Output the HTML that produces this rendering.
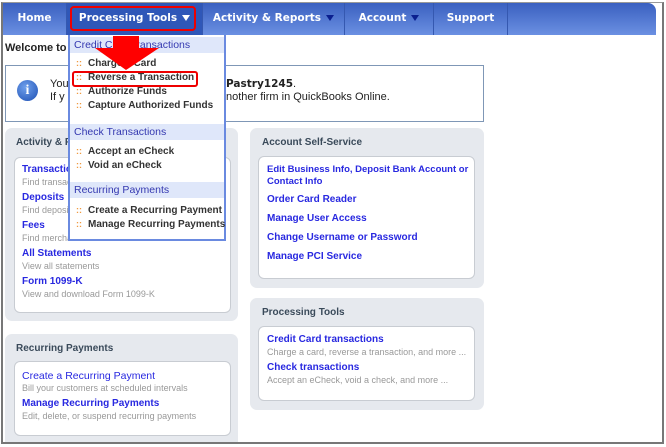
<!DOCTYPE html>
<html><head><style>
*{margin:0;padding:0;box-sizing:border-box}
body{width:666px;height:447px;background:#fff;position:relative;overflow:hidden;font-family:"Liberation Sans",Arial,sans-serif}
.abs{position:absolute}
.frame{left:1px;top:2px;width:663px;height:442px;border:2px solid #777;border-top:1px solid #999;z-index:5}
.nav{left:3px;top:3px;width:653px;height:32px;background:linear-gradient(#3a60c0,#6b90e2);border-top-right-radius:8px}
.nv{position:absolute;top:0;height:32px;line-height:30px;color:#fff;font-family:"DejaVu Sans",sans-serif;font-weight:bold;font-size:10.5px;text-align:center;border-right:1px solid #3558b0}
.tri{display:inline-block;width:0;height:0;border-left:4px solid transparent;border-right:4px solid transparent;border-top:6px solid #0a1f8f;margin-left:5px;vertical-align:middle}
.panel{background:#e6e9ee;border-radius:7px}
.ptitle{position:absolute;font-size:10px;color:#3a4a5a;font-weight:bold}
.inner{background:#fff;border:1px solid #c8ccd2;border-radius:6px}
.lk{position:absolute;font-size:10px;color:#2828e0;font-weight:bold;white-space:nowrap}
.sb{position:absolute;font-size:9px;color:#999;white-space:nowrap}
.dd{left:68px;top:35px;width:158px;height:206px;background:#fff;border:2px solid #6a8ae0;border-top:none}
.dh{position:absolute;left:0;width:154px;height:16px;background:#dfe7fa;color:#3438b0;font-size:10.5px;line-height:16px;padding-left:4px}
.di{position:absolute;left:6px;font-size:10px;font-weight:bold;color:#333;white-space:nowrap}
.di b{color:#f09a40;font-weight:bold;margin-right:6px;font-size:9px}
</style></head><body>
<div class="abs frame"></div>
<div class="abs nav">
<div class="nv" style="left:0;width:64px">Home</div>
<div class="nv" style="left:64px;width:136px;background:#2f57b8">Processing Tools<span class="tri" style="border-top-color:#fff"></span></div>
<div class="nv" style="left:200px;width:142px">Activity &amp; Reports<span class="tri"></span></div>
<div class="nv" style="left:342px;width:89px">Account<span class="tri"></span></div>
<div class="nv" style="left:431px;width:74px">Support</div>
</div>
<div class="abs" style="left:70px;top:6px;width:126px;height:25px;border:2px solid #e00;border-radius:4px"></div>

<div class="abs" style="left:5px;top:42px;font-size:11px;font-weight:bold;color:#222">Welcome to</div>
<div class="abs" style="left:5px;top:65px;width:479px;height:57px;border:1px solid #7f97b6"></div>
<div class="abs" style="left:17px;top:80px;width:21px;height:21px;border-radius:50%;background:radial-gradient(circle at 40% 35%,#6fa0ec,#1d4fb3);color:#fff;font:bold 14px 'Liberation Serif',serif;text-align:center;line-height:21px">i</div>
<div class="abs" style="left:50px;top:78px;font-size:11px;color:#222;line-height:13px">You<br>If y</div>
<div class="abs" style="left:226px;top:78px;font-size:11px;color:#222;line-height:13px"><b style="font-family:'DejaVu Sans';font-size:10.5px">Pastry1245</b>.<br>nother firm in QuickBooks Online.</div>

<div class="abs panel" style="left:5px;top:128px;width:233px;height:193px"></div>
<div class="ptitle" style="left:16px;top:137px">Activity &amp; R</div>
<div class="abs inner" style="left:14px;top:157px;width:217px;height:156px"></div>
<div class="lk" style="left:22px;top:164px">Transactions</div><div class="sb" style="left:22px;top:177px">Find transactions</div>
<div class="lk" style="left:22px;top:192px">Deposits</div><div class="sb" style="left:22px;top:205px">Find deposits</div>
<div class="lk" style="left:22px;top:220px">Fees</div><div class="sb" style="left:22px;top:233px">Find merchant fees</div>
<div class="lk" style="left:22px;top:248px">All Statements</div><div class="sb" style="left:22px;top:261px">View all statements</div>
<div class="lk" style="left:22px;top:276px">Form 1099-K</div><div class="sb" style="left:22px;top:289px">View and download Form 1099-K</div>

<div class="abs panel" style="left:5px;top:334px;width:233px;height:109px;border-bottom-left-radius:0;border-bottom-right-radius:0"></div>
<div class="ptitle" style="left:16px;top:343px">Recurring Payments</div>
<div class="abs inner" style="left:14px;top:361px;width:217px;height:75px"></div>
<div class="lk" style="left:22px;top:370px;font-weight:normal;font-size:10.5px">Create a Recurring Payment</div><div class="sb" style="left:22px;top:383px">Bill your customers at scheduled intervals</div>
<div class="lk" style="left:22px;top:398px">Manage Recurring Payments</div><div class="sb" style="left:22px;top:411px">Edit, delete, or suspend recurring payments</div>

<div class="abs panel" style="left:250px;top:128px;width:234px;height:160px"></div>
<div class="ptitle" style="left:262px;top:137px">Account Self-Service</div>
<div class="abs inner" style="left:258px;top:156px;width:217px;height:123px"></div>
<div class="lk" style="left:267px;top:164px;line-height:12px;font-size:9.5px">Edit Business Info, Deposit Bank Account or<br>Contact Info</div>
<div class="lk" style="left:267px;top:194px">Order Card Reader</div>
<div class="lk" style="left:267px;top:213px">Manage User Access</div>
<div class="lk" style="left:267px;top:232px">Change Username or Password</div>
<div class="lk" style="left:267px;top:251px">Manage PCI Service</div>

<div class="abs panel" style="left:250px;top:298px;width:234px;height:112px"></div>
<div class="ptitle" style="left:262px;top:307px">Processing Tools</div>
<div class="abs inner" style="left:258px;top:326px;width:217px;height:75px"></div>
<div class="lk" style="left:267px;top:334px">Credit Card transactions</div><div class="sb" style="left:267px;top:347px">Charge a card, reverse a transaction, and more ...</div>
<div class="lk" style="left:267px;top:362px">Check transactions</div><div class="sb" style="left:267px;top:375px">Accept an eCheck, void a check, and more ...</div>

<div class="abs dd">
<div class="dh" style="top:2px">Credit Card Transactions</div>
<div class="di" style="top:23px"><b>::</b>Charge a Card</div>
<div class="di" style="top:37px"><b>::</b>Reverse a Transaction</div>
<div class="di" style="top:51px"><b>::</b>Authorize Funds</div>
<div class="di" style="top:65px"><b>::</b>Capture Authorized Funds</div>
<div class="dh" style="top:89px">Check Transactions</div>
<div class="di" style="top:111px"><b>::</b>Accept an eCheck</div>
<div class="di" style="top:125px"><b>::</b>Void an eCheck</div>
<div class="dh" style="top:147px">Recurring Payments</div>
<div class="di" style="top:170px"><b>::</b>Create a Recurring Payment</div>
<div class="di" style="top:184px"><b>::</b>Manage Recurring Payments</div>
</div>
<svg class="abs" style="left:95px;top:36px" width="66" height="36"><path d="M18 0H44V12H64L31 34L0 12H18Z" fill="#f00"/></svg>
<div class="abs" style="left:72px;top:71px;width:126px;height:16px;border:2px solid #e00;border-radius:3px"></div>
</body></html>
